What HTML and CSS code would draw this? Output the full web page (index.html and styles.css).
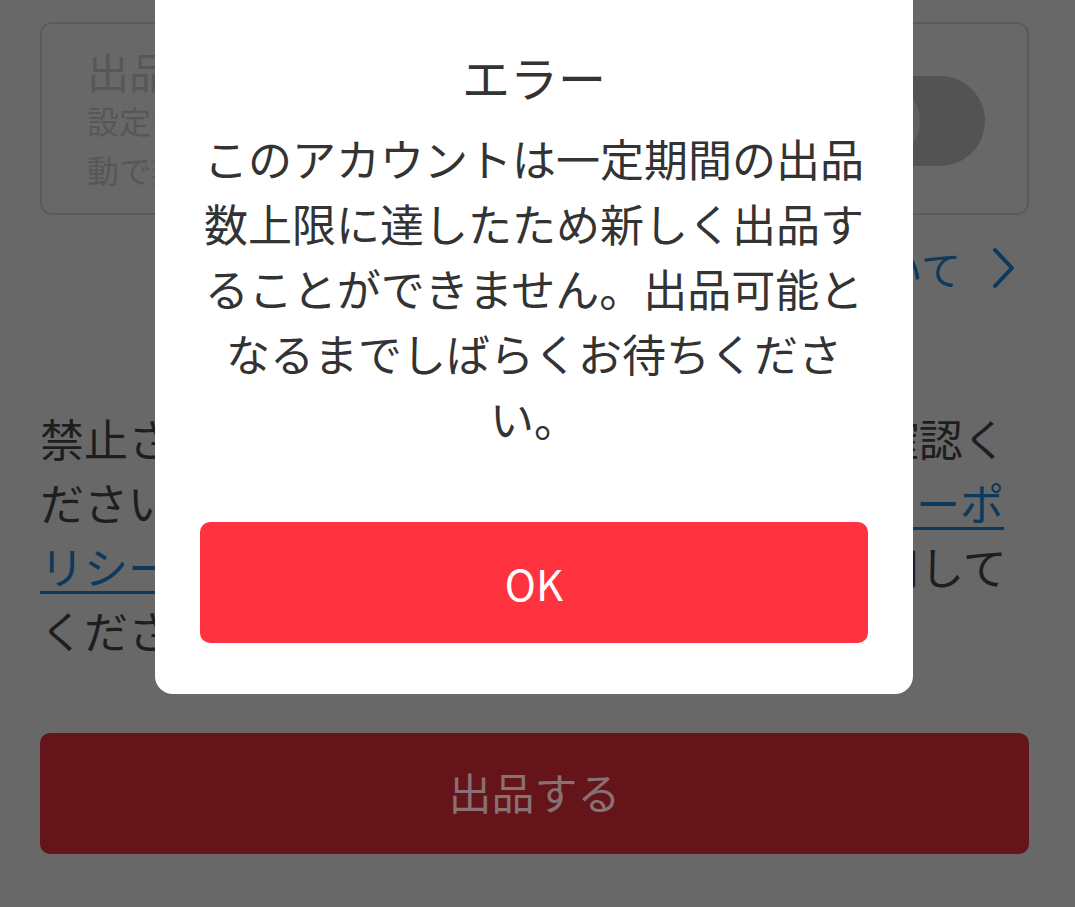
FILE: index.html
```html
<!DOCTYPE html>
<html lang="ja">
<head>
<meta charset="utf-8">
<title>エラー</title>
<link rel="stylesheet" href="styles.css">
</head>
<body>
<main class="page">
  <section class="setting-box">
    <div class="setting-text">
      <div class="setting-title">出品の一時停止</div>
      <div class="setting-desc">設定をオンにすると、出品後しばらくして商品が自<br>動で非公開になります。</div>
    </div>
    <div class="toggle"><span class="knob"></span></div>
  </section>

  <div class="more-row">
    <a class="more-link" href="#">出品の一時停止について</a>
    <svg class="chevron" width="24" height="44" viewBox="0 0 24 44"><polyline points="4,4 21,22 4,40" fill="none" stroke="#0d3a5c" stroke-width="4" stroke-linecap="round" stroke-linejoin="round"/></svg>
  </div>

  <p class="notice">禁止されている出品・行為を事前に必ずご確認く<br>ださい。詳しくは、メルカリの<a href="#" class="inline-link">コミュニティーポ<br>リシー</a>をご確認の上、サービスを正しく利用して<br>ください。</p>

  <button class="submit" type="button">出品する</button>
</main>

<div class="dialog" role="alertdialog">
  <h2 class="dialog-title">エラー</h2>
  <p class="dialog-body">このアカウントは一定期間の出品数上限に達したため新しく出品することができません。出品可能となるまでしばらくお待ちください。</p>
  <button class="dialog-ok" type="button">OK</button>
</div>
</body>
</html>
```

FILE: styles.css
```css
html, body {
  margin: 0;
  padding: 0;
}

body {
  background: #686868;
  font-family: "Noto Sans CJK JP", "Noto Sans", sans-serif;
  width: 1075px;
  height: 907px;
  overflow: hidden;
}

.page {
  padding: 22px 46px 0 40px;
  display: flex;
  flex-direction: column;
}

.setting-box {
  box-sizing: border-box;
  height: 193px;
  border: 2px solid #5b5b5b;
  border-radius: 12px;
  padding: 0 42px 0 45px;
  display: flex;
  align-items: center;
  justify-content: space-between;
}

.setting-text {
  color: #575757;
  margin-top: 2px;
}

.setting-title {
  font-size: 42px;
  line-height: 50px;
}

.setting-desc {
  font-size: 32px;
  line-height: 49px;
}

.toggle {
  width: 150px;
  height: 90px;
  border-radius: 45px;
  background: #535353;
  display: flex;
  align-items: center;
  padding: 0 5px;
  box-sizing: border-box;
  margin-top: 4px;
}

.knob {
  width: 80px;
  height: 80px;
  border-radius: 50%;
  background: #5f5f5f;
}

.more-row {
  margin-top: 25px;
  height: 56px;
  display: flex;
  align-items: center;
  justify-content: flex-end;
  gap: 30px;
  padding-right: 14px;
}

.more-link {
  color: #0d3a5c;
  font-size: 40px;
  text-decoration: none;
}

.chevron {
  display: block;
}

.notice {
  margin: 110px 0 0 0;
  font-size: 44px;
  line-height: 64px;
  color: #1e1e1e;
  white-space: nowrap;
}

.inline-link {
  color: #0d3a5c;
  text-decoration: underline;
  text-decoration-thickness: 3px;
  text-underline-offset: 6px;
}

.submit {
  margin-top: 71px;
  height: 121px;
  border: none;
  border-radius: 10px;
  background: #65151a;
  color: #887073;
  font-family: inherit;
  font-size: 43px;
  padding: 0 0 6px;
}

.dialog {
  position: fixed;
  left: 155px;
  top: -20px;
  width: 758px;
  box-sizing: border-box;
  padding: 64px 45px 51px;
  background: #ffffff;
  border-radius: 18px;
  display: flex;
  flex-direction: column;
  align-items: stretch;
  text-align: center;
  color: #333333;
}

.dialog-title {
  margin: 0;
  font-size: 48px;
  font-weight: normal;
  line-height: 64px;
}

.dialog-body {
  margin: 18px 0 0;
  font-size: 44px;
  line-height: 65px;
  line-break: strict;
}

.dialog-ok {
  margin-top: 71px;
  height: 121px;
  border: none;
  border-radius: 10px;
  background: #ff333f;
  color: #ffffff;
  font-family: inherit;
  font-size: 42px;
  padding: 0;
}
```
